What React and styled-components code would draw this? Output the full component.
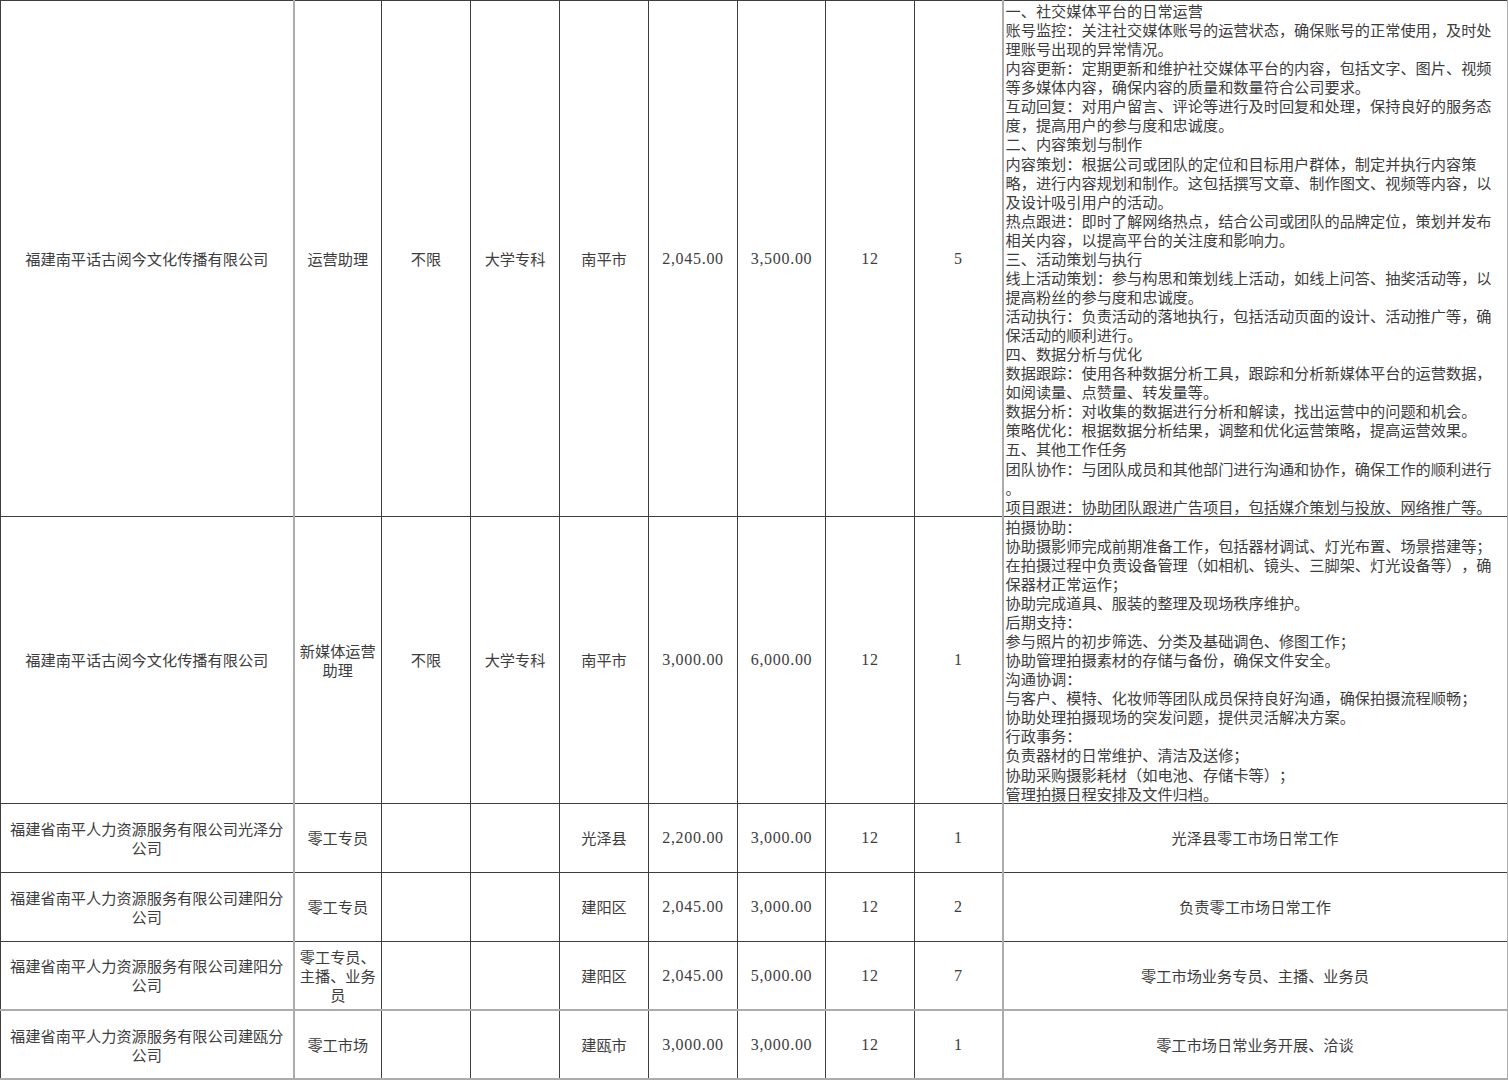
import React from "react"
import styled, { createGlobalStyle } from "styled-components"

const GlobalStyle = createGlobalStyle`
  html, body {
    margin: 0;
    padding: 0;
    background: #ffffff;
  }
  body {
    font-family: "Noto Sans CJK SC", "Liberation Sans", sans-serif;
    color: #3d3d3d;
    text-spacing-trim: space-all;
  }
`

const widths = [293, 88, 89, 89, 89, 89, 88, 89, 88, 505]

const jobs = [
  {
    company: ["福建南平话古阅今文化传播有限公司"],
    job: ["运营助理"],
    exp: "不限",
    edu: "大学专科",
    place: "南平市",
    min: "2,045.00",
    max: "3,500.00",
    months: "12",
    count: "5",
    desc: [
      "一、社交媒体平台的日常运营",
      "账号监控：关注社交媒体账号的运营状态，确保账号的正常使用，及时处",
      "理账号出现的异常情况。",
      "内容更新：定期更新和维护社交媒体平台的内容，包括文字、图片、视频",
      "等多媒体内容，确保内容的质量和数量符合公司要求。",
      "互动回复：对用户留言、评论等进行及时回复和处理，保持良好的服务态",
      "度，提高用户的参与度和忠诚度。",
      "二、内容策划与制作",
      "内容策划：根据公司或团队的定位和目标用户群体，制定并执行内容策",
      "略，进行内容规划和制作。这包括撰写文章、制作图文、视频等内容，以",
      "及设计吸引用户的活动。",
      "热点跟进：即时了解网络热点，结合公司或团队的品牌定位，策划并发布",
      "相关内容，以提高平台的关注度和影响力。",
      "三、活动策划与执行",
      "线上活动策划：参与构思和策划线上活动，如线上问答、抽奖活动等，以",
      "提高粉丝的参与度和忠诚度。",
      "活动执行：负责活动的落地执行，包括活动页面的设计、活动推广等，确",
      "保活动的顺利进行。",
      "四、数据分析与优化",
      "数据跟踪：使用各种数据分析工具，跟踪和分析新媒体平台的运营数据，",
      "如阅读量、点赞量、转发量等。",
      "数据分析：对收集的数据进行分析和解读，找出运营中的问题和机会。",
      "策略优化：根据数据分析结果，调整和优化运营策略，提高运营效果。",
      "五、其他工作任务",
      "团队协作：与团队成员和其他部门进行沟通和协作，确保工作的顺利进行",
      "。",
      "项目跟进：协助团队跟进广告项目，包括媒介策划与投放、网络推广等。",
    ],
  },
  {
    company: ["福建南平话古阅今文化传播有限公司"],
    job: ["新媒体运营", "助理"],
    exp: "不限",
    edu: "大学专科",
    place: "南平市",
    min: "3,000.00",
    max: "6,000.00",
    months: "12",
    count: "1",
    desc: [
      "拍摄协助：",
      "协助摄影师完成前期准备工作，包括器材调试、灯光布置、场景搭建等；",
      "在拍摄过程中负责设备管理（如相机、镜头、三脚架、灯光设备等），确",
      "保器材正常运作；",
      "协助完成道具、服装的整理及现场秩序维护。",
      "后期支持：",
      "参与照片的初步筛选、分类及基础调色、修图工作；",
      "协助管理拍摄素材的存储与备份，确保文件安全。",
      "沟通协调：",
      "与客户、模特、化妆师等团队成员保持良好沟通，确保拍摄流程顺畅；",
      "协助处理拍摄现场的突发问题，提供灵活解决方案。",
      "行政事务：",
      "负责器材的日常维护、清洁及送修；",
      "协助采购摄影耗材（如电池、存储卡等）；",
      "管理拍摄日程安排及文件归档。",
    ],
  },
  {
    company: ["福建省南平人力资源服务有限公司光泽分", "公司"],
    job: ["零工专员"],
    place: "光泽县",
    min: "2,200.00",
    max: "3,000.00",
    months: "12",
    count: "1",
    summary: "光泽县零工市场日常工作",
  },
  {
    company: ["福建省南平人力资源服务有限公司建阳分", "公司"],
    job: ["零工专员"],
    place: "建阳区",
    min: "2,045.00",
    max: "3,000.00",
    months: "12",
    count: "2",
    summary: "负责零工市场日常工作",
  },
  {
    company: ["福建省南平人力资源服务有限公司建阳分", "公司"],
    job: ["零工专员、", "主播、业务", "员"],
    place: "建阳区",
    min: "2,045.00",
    max: "5,000.00",
    months: "12",
    count: "7",
    summary: "零工市场业务专员、主播、业务员",
  },
  {
    company: ["福建省南平人力资源服务有限公司建瓯分", "公司"],
    job: ["零工市场"],
    place: "建瓯市",
    min: "3,000.00",
    max: "3,000.00",
    months: "12",
    count: "1",
    summary: "零工市场日常业务开展、洽谈",
    last: true,
  },
]

const Sheet = () => (
  <>
    <GlobalStyle />
    <Table>
      <colgroup>
        {widths.map((w, i) => (
          <col key={i} style={{ width: w }} />
        ))}
      </colgroup>
      <tbody>
        {jobs.map((r, i) => (
          <Row key={i} $fixed={!r.desc} $last={r.last}>
            <Cell $soft="right">
              {r.company.map((l) => (
                <Line key={l}>{l}</Line>
              ))}
            </Cell>
            <Cell>
              {r.job.map((l) => (
                <Line key={l}>{l}</Line>
              ))}
            </Cell>
            <Cell>{r.exp}</Cell>
            <Cell>{r.edu}</Cell>
            <Cell>{r.place}</Cell>
            <NumCell>{r.min}</NumCell>
            <NumCell>{r.max}</NumCell>
            <NumCell>{r.months}</NumCell>
            <NumCell>{r.count}</NumCell>
            {r.desc ? (
              <DescCell>
                {r.desc.map((l, j) => (
                  <Line key={j}>{l}</Line>
                ))}
              </DescCell>
            ) : (
              <Cell $soft="sides">{r.summary}</Cell>
            )}
          </Row>
        ))}
      </tbody>
    </Table>
  </>
)

const Table = styled.table`
  width: 1507px;
  table-layout: fixed;
  border-collapse: collapse;
  font-size: 15.2px;
  line-height: 19.07px;
`

const Row = styled.tr`
  height: ${(p) => (p.$fixed ? "69px" : "auto")};

  td {
    border-top-color: ${(p) => (p.$last ? "#acacac" : "#3e3e3e")};
    border-top-width: ${(p) => (p.$last ? "2px" : "1px")};
    border-bottom-color: ${(p) => (p.$last ? "#acacac" : "#3e3e3e")};
    border-bottom-width: ${(p) => (p.$last ? "2px" : "1px")};
  }
`

const Cell = styled.td`
  border: 1px solid #3e3e3e;
  padding: 0 2px;
  text-align: center;
  vertical-align: middle;
  white-space: nowrap;
  overflow: hidden;
  ${(p) => p.$soft === "right" && "border-right: 2px solid #acacac;"}
  ${(p) =>
    p.$soft === "sides" &&
    "border-left: 2px solid #acacac; border-right: 2px solid #acacac;"}
`

const NumCell = styled(Cell)`
  font-family: "Liberation Serif", "Noto Sans CJK SC", serif;
  font-size: 16px;
  letter-spacing: 0.7px;
`

const DescCell = styled(Cell)`
  text-align: left;
  padding: 0 2px 0 2px;
  border-left: 2px solid #acacac;
  border-right: 2px solid #acacac;
`

const Line = styled.div`
  display: block;
`

export default Sheet
